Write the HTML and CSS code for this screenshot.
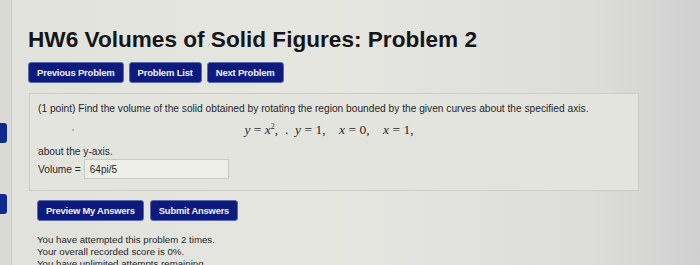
FILE: index.html
```html
<!DOCTYPE html>
<html>
<head>
<meta charset="utf-8">
<link rel="stylesheet" href="styles.css">
</head>
<body>
<div class="page">
  <aside class="rail">
    <div class="tab tab-a"></div>
    <div class="tab tab-b"></div>
  </aside>
  <main class="main">
    <h1 class="title">HW6 Volumes of Solid Figures: Problem 2</h1>
    <nav class="nav">
      <span class="btn">Previous Problem</span>
      <span class="btn">Problem List</span>
      <span class="btn">Next Problem</span>
    </nav>
    <section class="problem">
      <p class="statement">(1 point) Find the volume of the solid obtained by rotating the region bounded by the given curves about the specified axis.</p>
      <div class="eqrow">
        <span class="speck"></span>
        <span class="eq"><i>y</i> = <i>x</i><sup>2</sup>, &nbsp;. &nbsp;<i>y</i> = 1, &nbsp;&nbsp; <i>x</i> = 0, &nbsp;&nbsp; <i>x</i> = 1,</span>
      </div>
      <p class="axis">about the y-axis.</p>
      <div class="answer">
        <span class="label">Volume =</span>
        <span class="input">64pi/5</span>
      </div>
    </section>
    <div class="actions">
      <span class="btn btn-lg">Preview My Answers</span>
      <span class="btn btn-lg">Submit Answers</span>
    </div>
    <div class="status">
      <p>You have attempted this problem 2 times.</p>
      <p>Your overall recorded score is 0%.</p>
      <p>You have unlimited attempts remaining.</p>
    </div>
  </main>
</div>
</body>
</html>
```
FILE: styles.css
```css
html, body {
  margin: 0;
  padding: 0;
  height: 100%;
  overflow: hidden;
}
body {
  background: linear-gradient(90deg, #e2e2dd 0%, #e6e6e1 45%, #dcdcda 85%, #d0d0d0 100%);
  font-family: "Liberation Sans", Arial, sans-serif;
  color: #262626;
}
.page {
  display: flex;
  height: 265px;
}
.rail {
  width: 11px;
  flex: none;
  background: #d9d9d5;
  border-right: 1px solid #c9c9c5;
  display: flex;
  flex-direction: column;
}
.tab {
  width: 7px;
  background: #0c2a8c;
  border-radius: 0 3px 3px 0;
}
.tab-a {
  margin-top: 123px;
  height: 20px;
}
.tab-b {
  margin-top: 51px;
  height: 20px;
}
.main {
  flex: 1;
  padding-left: 16px;
}
.title {
  margin: 0;
  padding-top: 26px;
  font-size: 22.6px;
  line-height: 27px;
  font-weight: bold;
  color: #151515;
}
.nav {
  display: flex;
  gap: 5px;
  margin-top: 9px;
}
.btn {
  display: inline-flex;
  align-items: center;
  height: 19px;
  padding: 0 8px;
  background: #0d1b7e;
  color: #f2f2f8;
  font-size: 9.5px;
  font-weight: bold;
  border: 1px solid #5c6aa8;
  border-radius: 3px;
  letter-spacing: -0.2px;
}
.problem {
  margin-top: 10px;
  margin-left: 1px;
  width: 610px;
  height: 98px;
  box-sizing: border-box;
  padding: 8px 8px 0 8px;
  background: #e4e4de;
  border: 1px solid #cdcdc8;
  font-size: 10.2px;
}
.problem p {
  margin: 0;
}
.statement {
  line-height: 13px;
}
.eqrow {
  position: relative;
  height: 22px;
  margin-top: 4px;
  display: flex;
  justify-content: center;
  align-items: center;
}
.speck {
  position: absolute;
  left: 34px;
  top: 10px;
  width: 2px;
  height: 2px;
  background: #9a9a96;
  border-radius: 50%;
}
.eq {
  font-family: "Liberation Serif", "Times New Roman", serif;
  font-size: 13.5px;
  color: #2a2a2a;
  margin-left: -10px;
  white-space: pre;
}
.eq sup {
  font-size: 8px;
  line-height: 0;
}
.axis {
  margin-top: 5px !important;
  line-height: 12px;
}
.answer {
  display: flex;
  align-items: center;
  margin-top: 1px;
  gap: 3px;
}
.input {
  width: 145px;
  height: 20px;
  box-sizing: border-box;
  display: flex;
  align-items: center;
  padding-left: 5px;
  background: #eeeee8;
  border: 1px solid #cacac4;
  font-size: 10px;
}
.actions {
  display: flex;
  gap: 6px;
  margin-top: 9px;
  margin-left: 9px;
}
.btn-lg {
  height: 19px;
  font-size: 9.4px;
}
.status {
  margin-top: 13px;
  margin-left: 9px;
  font-size: 9.7px;
  line-height: 12px;
}
.status p {
  margin: 0;
}
```
